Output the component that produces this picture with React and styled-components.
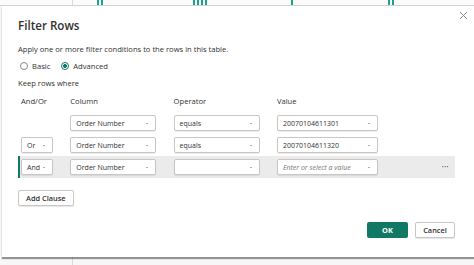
import React from "react";
import styled, { createGlobalStyle } from "styled-components";

const GlobalStyle = createGlobalStyle`
  html, body {
    margin: 0;
    padding: 0;
    background: #f6f6f6;
  }
  body {
    font-family: "Open Sans", "Noto Sans", sans-serif;
    color: #252423;
  }
`;

const clauses = [
  { logic: null, column: "Order Number", operator: "equals", value: "20070104611301" },
  { logic: "Or", column: "Order Number", operator: "equals", value: "20070104611320" },
  { logic: "And", column: "Order Number", operator: "", value: "", active: true },
];

// teal marks of the app behind the dialog: gap before each bar
const backBars = [24, 2, 90, 2, 2, 2, 84, 95, 2];

const App = () => {
  return (
    <Page>
      <GlobalStyle />
      <BackStrip $top>
        <Cell $w={72} />
        {backBars.map((ml, i) => (
          <Bar key={i} $ml={ml} />
        ))}
      </BackStrip>

      <Dialog>
        <CloseButton aria-label="Close">
          <svg width="9" height="9" viewBox="0 0 9 9">
            <path d="M1 1 L8 8 M8 1 L1 8" stroke="#8a8886" strokeWidth="1" fill="none" />
          </svg>
        </CloseButton>

        <Title>Filter Rows</Title>
        <Subtitle>Apply one or more filter conditions to the rows in this table.</Subtitle>

        <RadioRow>
          <RadioLabel>
            <Radio />
            Basic
          </RadioLabel>
          <RadioLabel>
            <Radio $checked />
            Advanced
          </RadioLabel>
        </RadioRow>

        <Caption>Keep rows where</Caption>

        <ClauseGrid>
          <HeaderRow>
            <HeaderCell>And/Or</HeaderCell>
            <HeaderCell>Column</HeaderCell>
            <HeaderCell>Operator</HeaderCell>
            <HeaderCell>Value</HeaderCell>
          </HeaderRow>

          {clauses.map((c, i) => (
            <ClauseRow key={i} $active={c.active}>
              {c.logic ? (
                <Select>
                  <span>{c.logic}</span>
                  <Caret />
                </Select>
              ) : (
                <span />
              )}
              <Select>
                <span>{c.column}</span>
                <Caret />
              </Select>
              <Select>
                <span>{c.operator}</span>
                <Caret />
              </Select>
              <Select>
                {c.value ? <span>{c.value}</span> : <Placeholder>Enter or select a value</Placeholder>}
                <Caret />
              </Select>
              {c.active && <More>•••</More>}
            </ClauseRow>
          ))}
        </ClauseGrid>

        <AddButton>Add Clause</AddButton>

        <Footer>
          <PrimaryButton>OK</PrimaryButton>
          <SecondaryButton>Cancel</SecondaryButton>
        </Footer>
      </Dialog>

      <BackStrip>
        <Cell $w={72} />
      </BackStrip>
    </Page>
  );
};

const Page = styled.div`
  width: 474px;
  height: 265px;
  display: flex;
  flex-direction: column;
  overflow: hidden;
`;

const BackStrip = styled.div`
  display: flex;
  align-items: stretch;
  height: ${(p) => (p.$top ? "5px" : "auto")};
  flex: ${(p) => (p.$top ? "none" : "1")};
  background: ${(p) => (p.$top ? "#fbfbfb" : "#f7f7f7")};
  border-bottom: ${(p) => (p.$top ? "1px solid #d2d2d2" : "none")};
`;

const Cell = styled.div`
  width: ${(p) => p.$w}px;
  border-right: 1px solid #dadada;
`;

const Bar = styled.div`
  width: 2px;
  margin-left: ${(p) => p.$ml}px;
  background: #1aa58a;
`;

const Dialog = styled.div`
  position: relative;
  height: 251px;
  flex: none;
  background: #fff;
  margin-left: 2px;
  padding: 0 19px 0 16px;
  box-shadow: 0 2px 1px rgba(0, 0, 0, 0.4);
  display: flex;
  flex-direction: column;
  z-index: 1;
`;

const CloseButton = styled.button`
  position: absolute;
  top: 3px;
  right: 5px;
  width: 12px;
  height: 12px;
  padding: 0;
  border: none;
  background: none;
  display: flex;
  align-items: center;
  justify-content: center;
`;

const Title = styled.h1`
  margin: 11px 0 0;
  font-size: 11.6px;
  line-height: 18px;
  font-weight: 600;
  color: #323130;
`;

const Subtitle = styled.p`
  margin: 8px 0 0;
  font-size: 7.6px;
  line-height: 12px;
  color: #323130;
`;

const RadioRow = styled.div`
  display: flex;
  gap: 9px;
  margin-top: 5px;
  height: 12px;
  align-items: center;
`;

const RadioLabel = styled.label`
  display: flex;
  align-items: center;
  gap: 4px;
  font-size: 7.6px;
  color: #323130;
`;

const Radio = styled.span`
  width: 6px;
  height: 6px;
  border-radius: 50%;
  border: 1px solid ${(p) => (p.$checked ? "#117865" : "#8a8886")};
  background: ${(p) => (p.$checked ? "radial-gradient(circle, #117865 0 1.8px, #fff 2.2px)" : "#fff")};
  margin-left: 2px;
`;

const Caption = styled.div`
  margin-top: 5px;
  font-size: 7.6px;
  line-height: 12px;
  color: #323130;
`;

const ClauseGrid = styled.div`
  display: flex;
  flex-direction: column;
  margin-top: 1px;
  width: 437px;
`;

const rowColumns = "32px 86px 86px 101px 1fr";

const HeaderRow = styled.div`
  display: grid;
  grid-template-columns: ${rowColumns};
  column-gap: 17.3px;
  align-items: center;
  height: 22px;
  padding-left: 3px;
`;

const HeaderCell = styled.div`
  font-size: 7.6px;
  color: #323130;
`;

const ClauseRow = styled.div`
  display: grid;
  grid-template-columns: ${rowColumns};
  column-gap: 17.3px;
  align-items: center;
  height: 22px;
  padding-left: 1px;
  border-left: 2px solid ${(p) => (p.$active ? "#117865" : "transparent")};
  background: ${(p) => (p.$active ? "#ebebeb" : "transparent")};
`;

const Select = styled.div`
  box-sizing: border-box;
  height: 15.5px;
  background: #fff;
  border: 1px solid #c8c6c4;
  border-radius: 2px;
  box-shadow: 0 1px 1px rgba(0, 0, 0, 0.08);
  display: flex;
  align-items: center;
  justify-content: space-between;
  padding: 0 7px 0 5px;
  font-size: 7px;
  color: #323130;
  white-space: nowrap;
`;

const Caret = styled.span`
  width: 0;
  height: 0;
  border-left: 1.5px solid transparent;
  border-right: 1.5px solid transparent;
  border-top: 1.5px solid #605e5c;
`;

const Placeholder = styled.span`
  font-style: italic;
  color: #7a7876;
`;

const More = styled.span`
  justify-self: end;
  margin-right: 6px;
  font-size: 5px;
  letter-spacing: 0.5px;
  color: #605e5c;
`;

const AddButton = styled.button`
  align-self: flex-start;
  margin: 12px 0 0;
  height: 16px;
  padding: 0 7px;
  background: #fff;
  border: 1px solid #c8c6c4;
  border-radius: 2px;
  box-shadow: 0 1px 1px rgba(0, 0, 0, 0.1);
  font-family: "Open Sans", sans-serif;
  font-size: 7.4px;
  font-weight: 600;
  color: #323130;
`;

const Footer = styled.div`
  display: flex;
  justify-content: flex-end;
  gap: 7px;
  margin-top: 16px;
`;

const PrimaryButton = styled.button`
  width: 41px;
  height: 15.5px;
  border: none;
  border-radius: 2px;
  background: #117865;
  color: #fff;
  font-family: "Open Sans", sans-serif;
  font-size: 7.4px;
  font-weight: 700;
`;

const SecondaryButton = styled.button`
  width: 40px;
  height: 15.5px;
  background: #fff;
  border: 1px solid #c8c6c4;
  border-radius: 2px;
  box-shadow: 0 1px 1px rgba(0, 0, 0, 0.1);
  color: #323130;
  font-family: "Open Sans", sans-serif;
  font-size: 7.4px;
  font-weight: 600;
`;

export default App;
